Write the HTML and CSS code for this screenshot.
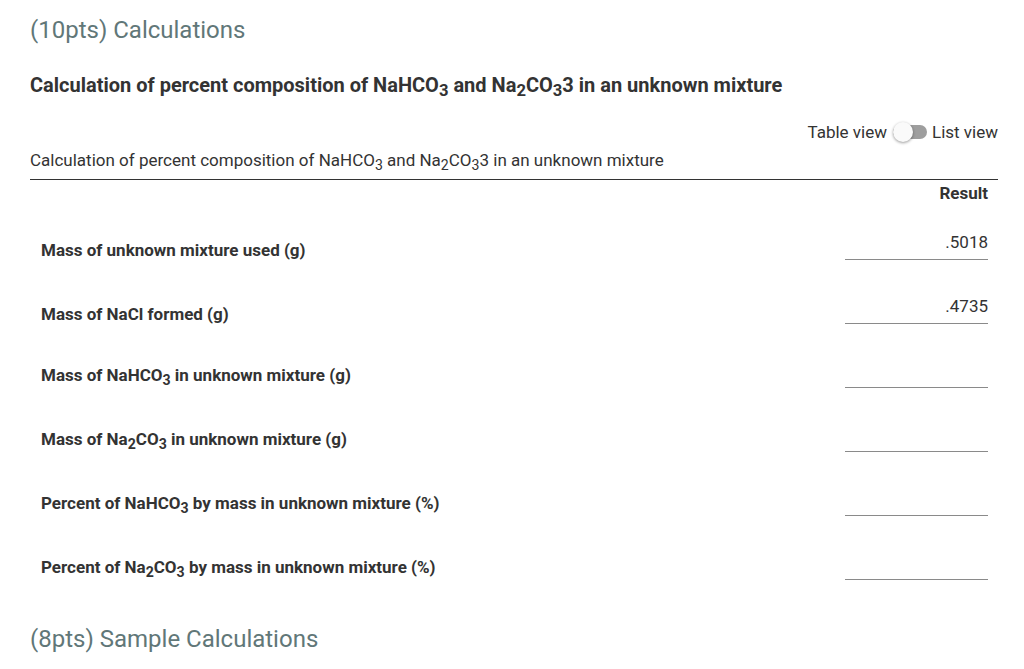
FILE: index.html
```html
<!DOCTYPE html>
<html lang="en">
<head>
<meta charset="UTF-8">
<title>Calculations</title>
<link rel="stylesheet" href="styles.css">
</head>
<body>
<div class="container">
	<h2 class="section-title">(10pts) Calculations</h2>
	<h3 class="question">Calculation of percent composition of NaHCO<sub>3</sub> and Na<sub>2</sub>CO<sub>3</sub>3 in an unknown mixture</h3>

	<div class="view-switch">
		<span>Table view</span>
		<span class="toggle"><i class="knob"></i></span>
		<span>List view</span>
	</div>

	<div class="caption">Calculation of percent composition of NaHCO<sub>3</sub> and Na<sub>2</sub>CO<sub>3</sub>3 in an unknown mixture</div>

	<div class="table">
		<div class="head">Result</div>
		<div class="row first">
			<div class="label">Mass of unknown mixture used (g)</div>
			<div class="answer">.5018</div>
		</div>
		<div class="row">
			<div class="label">Mass of NaCl formed (g)</div>
			<div class="answer">.4735</div>
		</div>
		<div class="row">
			<div class="label">Mass of NaHCO<sub>3</sub> in unknown mixture (g)</div>
			<div class="answer"></div>
		</div>
		<div class="row">
			<div class="label">Mass of Na<sub>2</sub>CO<sub>3</sub> in unknown mixture (g)</div>
			<div class="answer"></div>
		</div>
		<div class="row">
			<div class="label">Percent of NaHCO<sub>3</sub> by mass in unknown mixture (%)</div>
			<div class="answer"></div>
		</div>
		<div class="row">
			<div class="label">Percent of Na<sub>2</sub>CO<sub>3</sub> by mass in unknown mixture (%)</div>
			<div class="answer"></div>
		</div>
	</div>

	<h2 class="section-title next">(8pts) Sample Calculations</h2>
</div>
</body>
</html>
```
FILE: styles.css
```css
body{
	margin:0;
	font-family:Roboto,"Liberation Sans",sans-serif;
	color:#333;
	background:#fff;
}
.container{
	padding:15px 26px 0 30px;
}
sub{
	font-size:0.83em;
	vertical-align:-0.25em;
	line-height:0;
}
.section-title{
	margin:0;
	font-size:24px;
	font-weight:normal;
	color:#617778;
	line-height:30px;
}
.section-title.next{
	margin-top:34px;
}
.question{
	margin:28px 0 0;
	font-size:20px;
	font-weight:bold;
	line-height:24px;
	color:#333;
}
.view-switch{
	display:flex;
	justify-content:flex-end;
	align-items:center;
	gap:5px;
	margin-top:25px;
	font-size:17px;
	color:#333;
	line-height:20px;
}
.toggle{
	position:relative;
	display:inline-block;
	width:34px;
	height:14px;
	border-radius:7px;
	background:#9e9e9e;
	margin-left:1px;
}
.knob{
	position:absolute;
	left:0;
	top:-3px;
	width:20px;
	height:20px;
	border-radius:50%;
	background:#fafafa;
	box-shadow:0 1px 3px rgba(0,0,0,0.4);
}
.caption{
	margin-top:8px;
	padding-bottom:9px;
	border-bottom:1px solid #333;
	font-size:17px;
	line-height:20px;
	color:#333;
}
.head{
	text-align:right;
	padding:3px 10px 0 0;
	font-size:17px;
	font-weight:bold;
	line-height:20px;
}
.row{
	display:flex;
	justify-content:space-between;
	align-items:flex-end;
	height:64px;
	padding:0 10px 0 11px;
}
.row.first{
	height:67px;
}
.label{
	font-size:17px;
	font-weight:bold;
	line-height:20px;
	margin-bottom:10px;
}
.label sub{
	position:relative;
	top:0;
}
.row:nth-child(n+4) .label{
	margin-bottom:13px;
}
.answer{
	width:143px;
	height:27px;
	margin-bottom:10px;
	border-bottom:1px solid #8a8a8a;
	text-align:right;
	font-size:17px;
	line-height:20px;
	color:#333;
}
```
